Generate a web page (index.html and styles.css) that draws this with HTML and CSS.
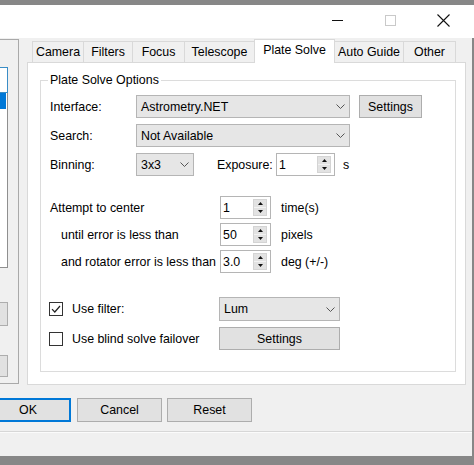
FILE: index.html
```html
<!DOCTYPE html>
<html>
<head>
<meta charset="utf-8">
<title>Plate Solve Options</title>
<link rel="stylesheet" href="styles.css">
</head>
<body>
<div class="window">
  <div class="titlebar">
    <span class="cap"><svg width="11" height="3" viewBox="0 0 11 3"><rect x="0" y="1" width="11" height="1" fill="#111"/></svg></span>
    <span class="cap"><svg width="11" height="11" viewBox="0 0 11 11"><rect x="0.5" y="0.5" width="10" height="10" fill="none" stroke="#c9c9c9"/></svg></span>
    <span class="cap"><svg width="13" height="13" viewBox="0 0 13 13"><path d="M0.5 0.5L12.5 12.5M12.5 0.5L0.5 12.5" stroke="#111" stroke-width="1.1" fill="none"/></svg></span>
  </div>
  <div class="body">
    <div class="main">
      <div class="side">
        <div class="list">
          <div class="item item-focus"></div>
          <div class="item item-sel"></div>
        </div>
        <div class="sidebtn sidebtn-1"></div>
        <div class="sidebtn sidebtn-2"></div>
      </div>
      <div class="tabctl">
        <div class="tabstrip">
          <div class="tab t-camera">Camera</div>
          <div class="tab t-filters">Filters</div>
          <div class="tab t-focus">Focus</div>
          <div class="tab t-telescope">Telescope</div>
          <div class="tab t-plate tab-active">Plate Solve</div>
          <div class="tab t-guide">Auto Guide</div>
          <div class="tab t-other">Other</div>
        </div>
        <div class="page">
          <fieldset class="group">
            <legend>Plate Solve Options</legend>

            <div class="row r-first">
              <span class="lbl">Interface:</span>
              <div class="combo w-wide"><span class="val">Astrometry.NET</span><span class="arrow"><svg width="9" height="5" viewBox="0 0 9 5"><polyline points="0.5,0.5 4.5,4.5 8.5,0.5" fill="none" stroke="#555"/></svg></span></div>
              <button class="btn btn-settings">Settings</button>
            </div>

            <div class="row r-gap6">
              <span class="lbl">Search:</span>
              <div class="combo w-wide"><span class="val">Not Available</span><span class="arrow"><svg width="9" height="5" viewBox="0 0 9 5"><polyline points="0.5,0.5 4.5,4.5 8.5,0.5" fill="none" stroke="#555"/></svg></span></div>
            </div>

            <div class="row r-gap6">
              <span class="lbl">Binning:</span>
              <div class="combo w-bin"><span class="val">3x3</span><span class="arrow"><svg width="9" height="5" viewBox="0 0 9 5"><polyline points="0.5,0.5 4.5,4.5 8.5,0.5" fill="none" stroke="#555"/></svg></span></div>
              <span class="lbl-exp">Exposure:</span>
              <div class="spin w-exp">
                <span class="val">1</span>
                <span class="spinner"><span class="sp-up"><svg width="5" height="3" viewBox="0 0 5 3"><polygon points="0,3 2.5,0 5,3" fill="#111"/></svg></span><span class="sp-down"><svg width="5" height="3" viewBox="0 0 5 3"><polygon points="0,0 2.5,3 5,0" fill="#111"/></svg></span></span>
              </div>
              <span class="unit unit-s">s</span>
            </div>

            <div class="row r-gap20">
              <span class="lbl-wide">Attempt to center</span>
              <div class="spin w-spin">
                <span class="val">1</span>
                <span class="spinner"><span class="sp-up"><svg width="5" height="3" viewBox="0 0 5 3"><polygon points="0,3 2.5,0 5,3" fill="#111"/></svg></span><span class="sp-down"><svg width="5" height="3" viewBox="0 0 5 3"><polygon points="0,0 2.5,3 5,0" fill="#111"/></svg></span></span>
              </div>
              <span class="unit">time(s)</span>
            </div>

            <div class="row r-gap4">
              <span class="lbl-wide indent">until error is less than</span>
              <div class="spin w-spin">
                <span class="val">50</span>
                <span class="spinner"><span class="sp-up"><svg width="5" height="3" viewBox="0 0 5 3"><polygon points="0,3 2.5,0 5,3" fill="#111"/></svg></span><span class="sp-down"><svg width="5" height="3" viewBox="0 0 5 3"><polygon points="0,0 2.5,3 5,0" fill="#111"/></svg></span></span>
              </div>
              <span class="unit">pixels</span>
            </div>

            <div class="row r-gap4">
              <span class="lbl-wide indent">and rotator error is less than</span>
              <div class="spin w-spin">
                <span class="val">3.0</span>
                <span class="spinner"><span class="sp-up"><svg width="5" height="3" viewBox="0 0 5 3"><polygon points="0,3 2.5,0 5,3" fill="#111"/></svg></span><span class="sp-down"><svg width="5" height="3" viewBox="0 0 5 3"><polygon points="0,0 2.5,3 5,0" fill="#111"/></svg></span></span>
              </div>
              <span class="unit">deg (+/-)</span>
            </div>

            <div class="row r-gap24 r-tall">
              <span class="lbl-wide chkwrap"><span class="chk"><svg width="12" height="12" viewBox="0 0 12 12"><polyline points="2,6.2 4.8,9 10,3" fill="none" stroke="#222" stroke-width="1.2"/></svg></span>Use filter:</span>
              <div class="combo w-filter"><span class="val">Lum</span><span class="arrow"><svg width="9" height="5" viewBox="0 0 9 5"><polyline points="0.5,0.5 4.5,4.5 8.5,0.5" fill="none" stroke="#555"/></svg></span></div>
            </div>

            <div class="row r-gap6">
              <span class="lbl-wide chkwrap"><span class="chk"></span>Use blind solve failover</span>
              <button class="btn w-filter">Settings</button>
            </div>
          </fieldset>
        </div>
      </div>
    </div>
    <div class="buttons">
      <button class="btn dlg-btn btn-ok">OK</button>
      <button class="btn dlg-btn btn-cancel">Cancel</button>
      <button class="btn dlg-btn btn-reset">Reset</button>
    </div>
    <div class="sep"></div>
  </div>
</div>
</body>
</html>
```

FILE: styles.css
```css
* { box-sizing: border-box; }

html, body {
  margin: 0;
  padding: 0;
}

body {
  width: 474px;
  height: 465px;
  overflow: hidden;
  background: #878787;
  font-family: "Liberation Sans", Arial, sans-serif;
  font-size: 12.4px;
  color: #000;
}

.window {
  margin-top: 5px;
  width: 474px;
}

/* ---------- title bar ---------- */
.titlebar {
  height: 33px;
  background: #fff;
  display: flex;
  justify-content: flex-end;
  padding-right: 4px;
}

.cap {
  width: 53px;
  display: flex;
  align-items: center;
  justify-content: center;
  padding-bottom: 3px;
}

/* ---------- dialog body ---------- */
.body {
  width: 472px;
  height: 418px;
  background: #f0f0f0;
  overflow: hidden;
}

.main {
  display: flex;
  height: 347px;
}

/* left, partially visible panel */
.side {
  margin-top: 1px;
  width: 19px;
  height: 345px;
  border: 1px solid #a9a9a9;
  border-left: none;
  padding-top: 27px;
}

.list {
  margin-left: -12px;
  width: 20px;
  height: 201px;
  border: 1px solid #8f8f8f;
  background: #fff;
}

.item-focus {
  height: 26px;
  margin: -1px -1px 0 -1px;
  border: 1px solid #3a8dc6;
  background: #fff;
}

.item-sel {
  height: 16px;
  margin: 0 1px 0 0;
  background: #0078d7;
}

.sidebtn {
  margin-left: -20px;
  width: 28px;
  border: 1px solid #adadad;
  background: #e1e1e1;
}

.sidebtn-1 {
  margin-top: 34px;
  height: 24px;
}

.sidebtn-2 {
  margin-top: 29px;
  height: 22px;
}

/* ---------- tab control ---------- */
.tabctl {
  margin-left: 8px;
  margin-top: 1px;
  width: 439px;
}

.tabstrip {
  display: flex;
  align-items: flex-end;
  height: 23px;
  padding-left: 5px;
}

.tab {
  height: 21px;
  margin-right: -1px;
  border: 1px solid #d9d9d9;
  border-bottom: none;
  background: #f0f0f0;
  display: flex;
  align-items: center;
  justify-content: center;
  padding-bottom: 1px;
  white-space: nowrap;
}

.t-camera { width: 52px; }
.t-filters { width: 50px; }
.t-focus { width: 53px; }
.t-telescope { width: 71px; }
.t-plate { width: 81px; }
.t-guide { width: 70px; }
.t-other { width: 53px; }

.tab-active {
  height: 24px;
  margin-bottom: -1px;
  background: #fff;
  position: relative;
  z-index: 1;
  padding-bottom: 3px;
}

.page {
  height: 323px;
  border: 1px solid #d9d9d9;
  background: #fff;
  padding-top: 9px;
}

/* ---------- group box ---------- */
.group {
  margin: 0 9px 0 12px;
  min-width: 0;
  border: 1px solid #dcdcdc;
  padding: 0 0 21px 9px;
}

.group legend {
  padding: 0 2px;
  margin-left: -2px;
  line-height: 16px;
  height: 16px;
}

.row {
  display: flex;
  align-items: center;
  height: 23px;
  white-space: nowrap;
}

.r-first { margin-top: 7px; }
.r-gap4 { margin-top: 4px; }
.r-gap6 { margin-top: 6px; }
.r-gap20 { margin-top: 20px; }
.r-gap24 { margin-top: 24px; }
.r-tall { height: 24px; }

.lbl {
  width: 86px;
  flex: none;
}

.lbl-wide {
  width: 170px;
  flex: none;
}

.indent { padding-left: 11px; }

.lbl-exp {
  margin-left: 23px;
  width: 59px;
  flex: none;
}

.unit { margin-left: 10px; }
.unit-s { margin-left: 8px; }

/* combo box */
.combo {
  height: 100%;
  flex: none;
  border: 1px solid #b5b5b5;
  background: #e6e6e6;
  display: flex;
  align-items: center;
  padding-left: 4px;
}

.combo .val { flex: 1; }

.combo .arrow {
  width: 17px;
  display: flex;
  align-items: center;
  justify-content: center;
}

.w-wide { width: 214px; }
.w-bin { width: 58px; }
.w-filter { width: 121px; }

/* numeric up/down */
.spin {
  height: 23px;
  flex: none;
  border: 1px solid #b5b5b5;
  background: #fff;
  display: flex;
  padding: 2px 3px 2px 2px;
}

.spin .val {
  flex: 1;
  display: flex;
  align-items: center;
}

.spinner {
  width: 14px;
  display: flex;
  flex-direction: column;
  background: #e2e2e2;
  border: 1px solid #d4d4d4;
}

.spinner span {
  flex: 1;
  display: flex;
  align-items: center;
  justify-content: center;
}

.sp-up { border-bottom: 1px solid #f2f2f2; }

.w-exp { width: 59px; }
.w-spin { width: 51px; }

/* buttons */
.btn {
  height: 23px;
  padding: 0;
  border: 1px solid #adadad;
  background: #e1e1e1;
  font-family: inherit;
  font-size: 12.4px;
  color: #000;
  display: flex;
  align-items: center;
  justify-content: center;
  flex: none;
}

.btn-settings {
  margin-left: 9px;
  width: 63px;
}

/* checkbox */
.chkwrap {
  display: flex;
  align-items: center;
  margin-left: -1px;
}

.chk {
  width: 14px;
  height: 14px;
  border: 1px solid #333;
  background: #fff;
  margin-right: 9px;
  display: flex;
  align-items: center;
  justify-content: center;
}

/* dialog buttons */
.buttons {
  display: flex;
  margin-top: 13px;
  height: 24px;
}

.dlg-btn {
  height: 24px;
  width: 85px;
}

.btn-ok {
  margin-left: -15px;
  width: 86px;
  border: 2px solid #0078d7;
}

.btn-cancel { margin-left: 6px; }
.btn-reset { margin-left: 5px; }

.sep {
  margin-top: 9px;
  height: 2px;
  border-top: 1px solid #d7d7d7;
  border-bottom: 1px solid #fbfbfb;
}
```
